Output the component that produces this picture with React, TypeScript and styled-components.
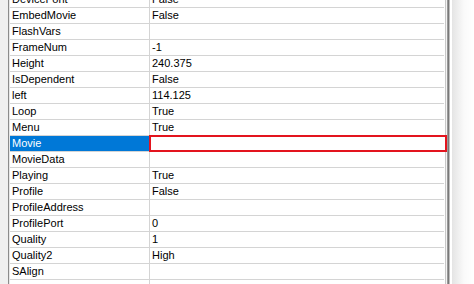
import React from 'react';
import styled, { createGlobalStyle } from 'styled-components';

const GlobalStyle = createGlobalStyle`
  html, body {
    margin: 0;
    padding: 0;
    background: #ffffff;
  }
`;

const Window = styled.div`
  display: flex;
  width: 474px;
  height: 284px;
  overflow: hidden;
  background: #ffffff;
  font-family: 'Liberation Sans', Arial, sans-serif;
  font-size: 11px;
  color: #000;
`;

const Gutter = styled.div`
  width: 8px;
  flex: none;
  background: #f0f0f0;
  border-right: 1px solid #8c8c8c;
`;

const Grid = styled.div`
  width: 434px;
  flex: none;
  margin-top: -8px;
  border-left: 1px solid #e8e8e8;
`;

const Row = styled.div`
  display: grid;
  grid-template-columns: 139px 1fr;
  height: 16px;
  box-sizing: border-box;
  border-bottom: 1px solid #d4d4d4;
  line-height: 15px;
`;

const NameCell = styled.div<{ $selected?: boolean }>`
  padding-left: 2px;
  white-space: nowrap;
  overflow: hidden;
  background: ${(p) => (p.$selected ? '#0078d7' : 'transparent')};
  color: ${(p) => (p.$selected ? '#ffffff' : 'inherit')};
`;

const ValueCell = styled.div<{ $editing?: boolean }>`
  position: relative;
  padding-left: 2px;
  white-space: nowrap;
  border-left: 1px solid #d4d4d4;
  ${(p) =>
    p.$editing &&
    `
    &::after {
      content: '';
      position: absolute;
      left: -1px;
      top: -1px;
      right: -3px;
      bottom: -1px;
      border: 2px solid #e3141e;
      pointer-events: none;
    }
  `}
`;

const Frame = styled.div`
  width: 8px;
  flex: none;
  box-sizing: border-box;
  border-left: 1px solid #ffffff;
  display: flex;
`;

const FrameLine = styled.div<{ $color: string; $w: number }>`
  width: ${(p) => p.$w}px;
  background: ${(p) => p.$color};
`;

const Shadow = styled.div`
  flex: 1;
  background: linear-gradient(to right, #e4e4e4, #fafafa 55%, #ffffff);
`;

type Prop = { name: string; value: string };

const props: Prop[] = [
  { name: 'DeviceFont', value: 'False' },
  { name: 'EmbedMovie', value: 'False' },
  { name: 'FlashVars', value: '' },
  { name: 'FrameNum', value: '-1' },
  { name: 'Height', value: '240.375' },
  { name: 'IsDependent', value: 'False' },
  { name: 'left', value: '114.125' },
  { name: 'Loop', value: 'True' },
  { name: 'Menu', value: 'True' },
  { name: 'Movie', value: '' },
  { name: 'MovieData', value: '' },
  { name: 'Playing', value: 'True' },
  { name: 'Profile', value: 'False' },
  { name: 'ProfileAddress', value: '' },
  { name: 'ProfilePort', value: '0' },
  { name: 'Quality', value: '1' },
  { name: 'Quality2', value: 'High' },
  { name: 'SAlign', value: '' },
  { name: '', value: '' },
];

const App: React.FC = () => {
  return (
    <>
      <GlobalStyle />
      <Window>
        <Gutter />
        <Grid>
          {props.map((p, i) => {
            const selected = p.name === 'Movie';
            return (
              <Row key={i}>
                <NameCell $selected={selected}>{p.name}</NameCell>
                <ValueCell $editing={selected}>{p.value}</ValueCell>
              </Row>
            );
          })}
        </Grid>
        <Frame>
          <FrameLine $color="#c8c8c8" $w={1} />
          <FrameLine $color="#f4f4f4" $w={1} />
          <FrameLine $color="#9a9a9a" $w={1} />
          <FrameLine $color="#7a7a7a" $w={1} />
          <FrameLine $color="#bdbdbd" $w={1} />
        </Frame>
        <Shadow />
      </Window>
    </>
  );
};

export default App;
